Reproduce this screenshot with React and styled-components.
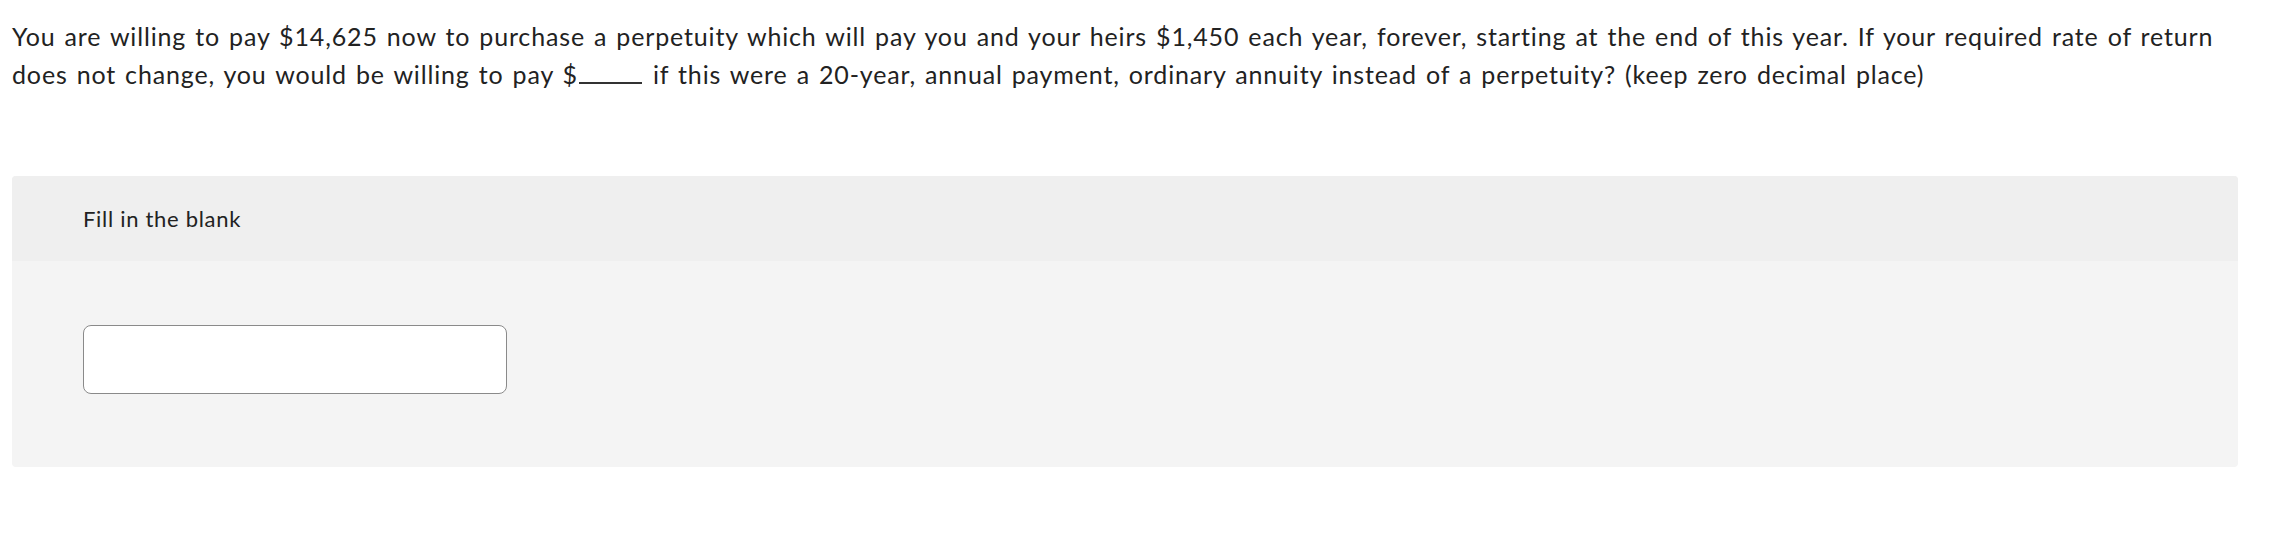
import React from 'react';
import styled, { createGlobalStyle } from 'styled-components';

const GlobalStyle = createGlobalStyle`
    html, body {
        margin: 0;
        padding: 0;
        background: #ffffff;
    }
    body {
        font-family: Lato, "Open Sans", "Liberation Sans", sans-serif;
        color: #222222;
    }
`;

const Page = styled.div`
    width: 2226px;
    padding: 0 0 0 12px;
`;

const Question = styled.p`
    margin: 17px 0 0 0;
    font-size: 25px;
    line-height: 38px;
    letter-spacing: 0.85px;
    word-spacing: 1.8px;
    color: #222222;
`;

// the answer gap in the question sentence
const Blank = styled.span`
    display: inline-block;
    width: 63px;
    height: 2px;
    margin: 0 2px 0 1px;
    background: #333333;
    vertical-align: baseline;
`;

const Card = styled.div`
    margin-top: 83px;
    border-radius: 4px;
    overflow: hidden;
    background: #f4f4f4;
`;

const CardHeader = styled.div`
    height: 85px;
    display: flex;
    align-items: center;
    padding-left: 71px;
    background: #efefef;
    font-size: 22px;
    letter-spacing: 0.7px;
    color: #222222;
`;

const CardBody = styled.div`
    padding: 64px 0 73px 71px;
`;

const AnswerInput = styled.input`
    display: block;
    box-sizing: border-box;
    width: 424px;
    height: 69px;
    border: 1.5px solid #8a8a8a;
    border-radius: 8px;
    background: #ffffff;
    font-family: inherit;
    font-size: 22px;
    padding: 0 14px;
    outline: none;
`;

const App = () => {
    return (
        <Page>
            <GlobalStyle />
            <Question>
                You are willing to pay $14,625 now to purchase a perpetuity which will pay you and your heirs $1,450 each year, forever, starting at the end of this year. If your required rate of return does not change, you would be willing to pay $<Blank aria-label="blank" /> if this were a 20-year, annual payment, ordinary annuity instead of a perpetuity? (keep zero decimal place)
            </Question>
            <Card>
                <CardHeader>Fill in the blank</CardHeader>
                <CardBody>
                    <AnswerInput type="text" aria-label="Fill in the blank" />
                </CardBody>
            </Card>
        </Page>
    );
};

export default App;
